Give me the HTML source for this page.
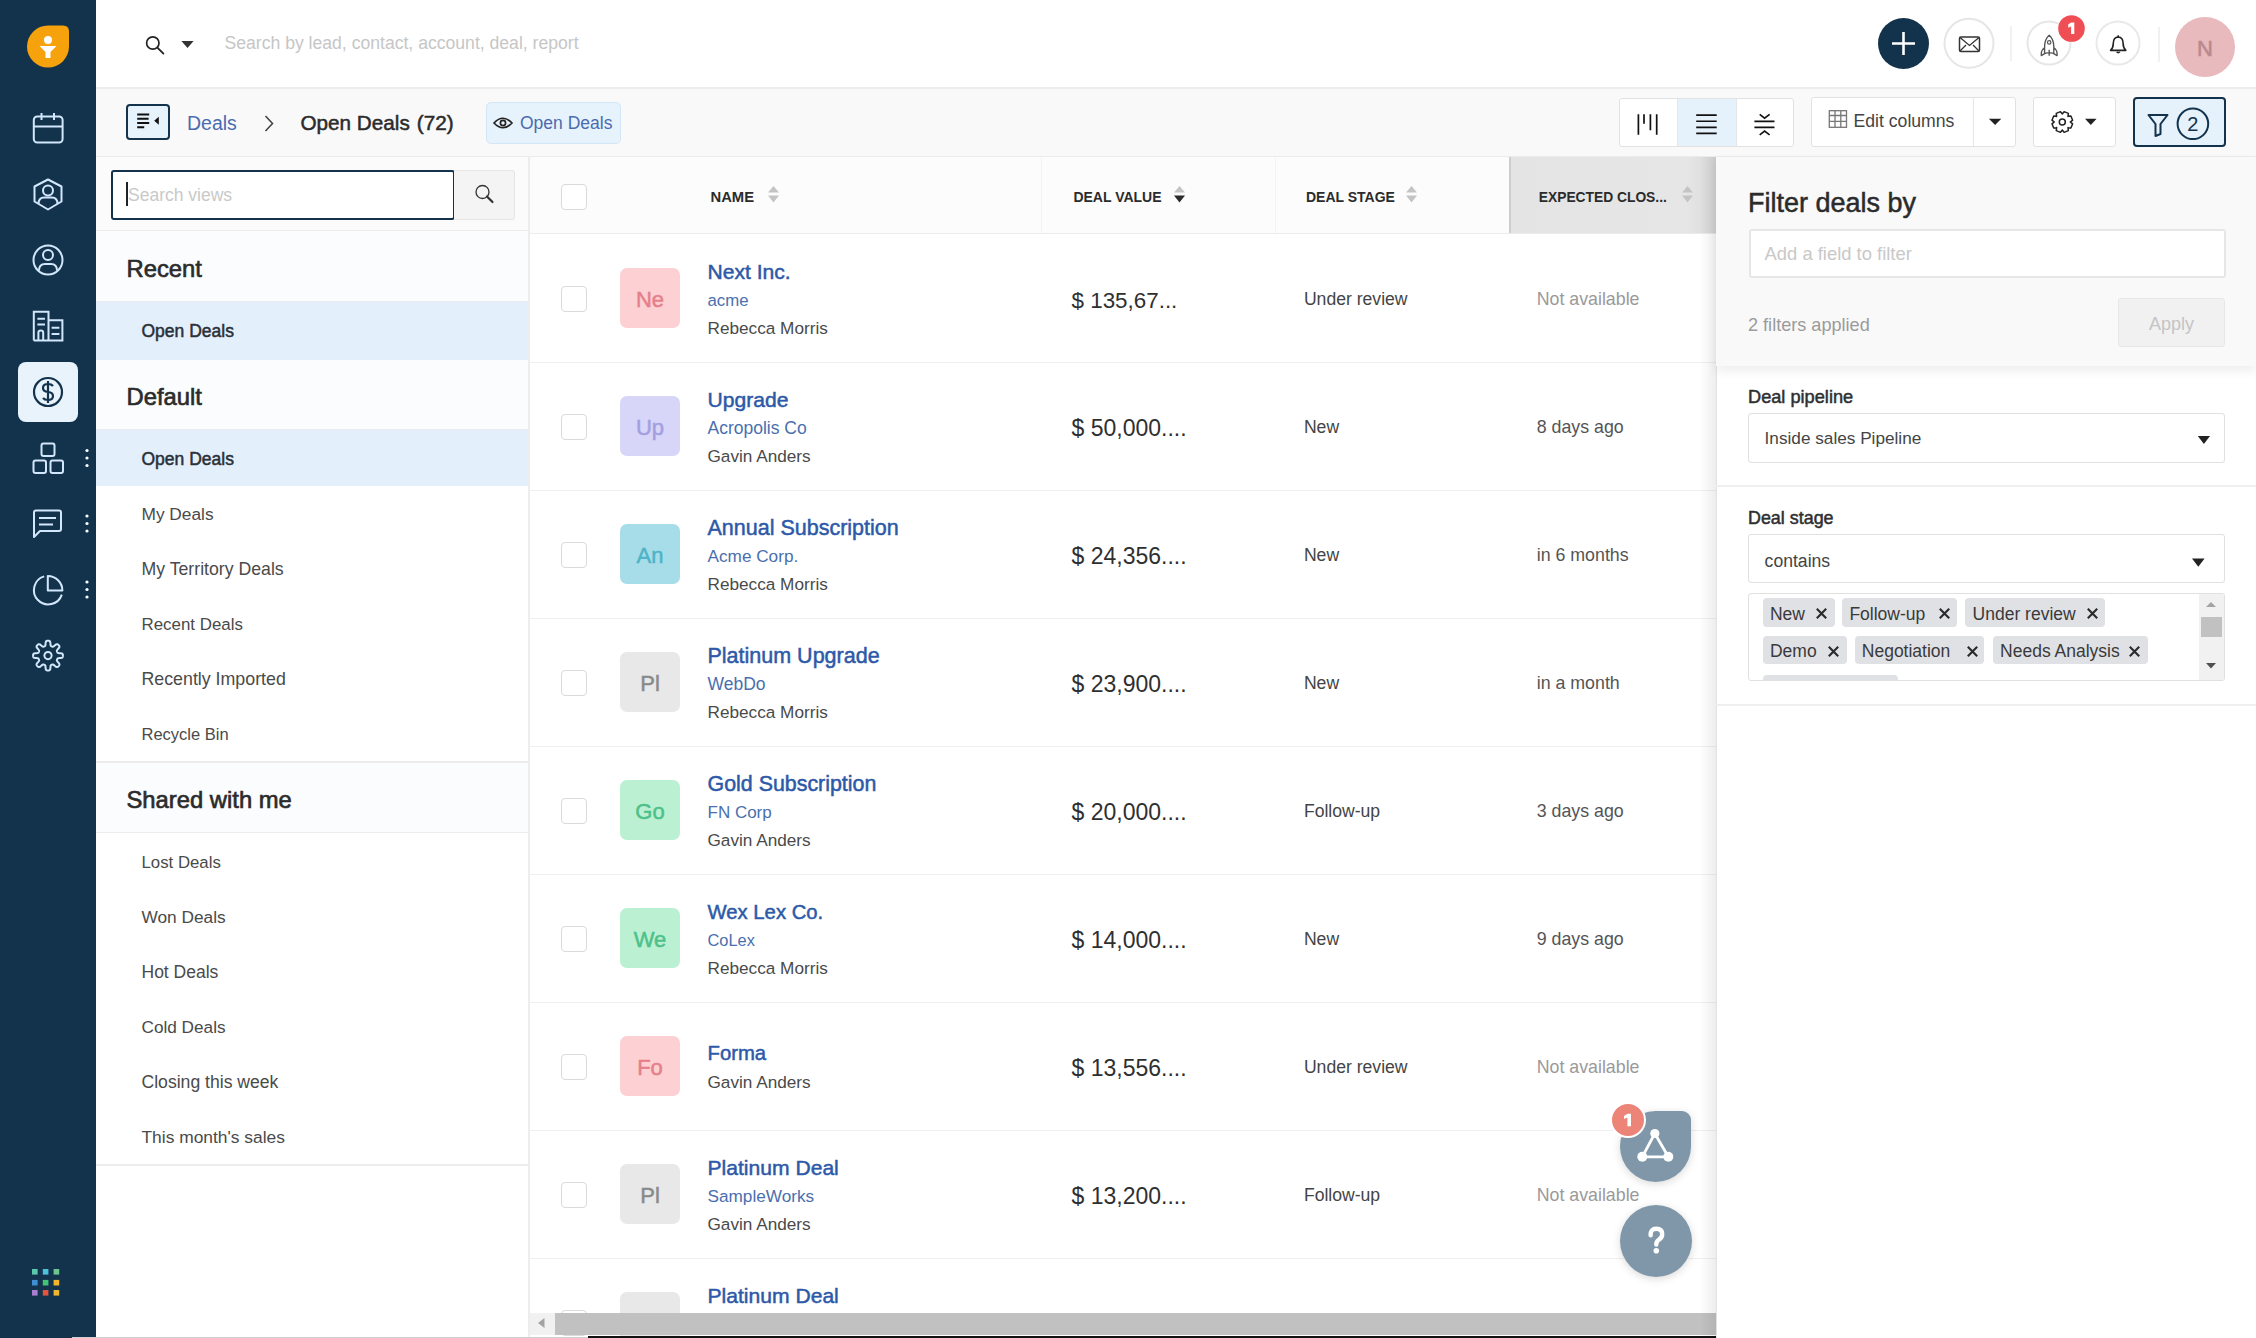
<!DOCTYPE html>
<html><head><meta charset="utf-8">
<style>
*{box-sizing:border-box;margin:0;padding:0}
html,body{width:2256px;height:1338px;overflow:hidden;background:#fff;font-family:"Liberation Sans",sans-serif;color:#333}
.a{position:absolute}
#nav{left:0;top:0;width:96px;height:1338px;background:#13334c}
#top{left:96px;top:0;width:2160px;height:88px;background:#fff;border-bottom:1px solid #ececec}
#sub{left:96px;top:88px;width:2160px;height:69px;background:#f9f9f9;border-bottom:1px solid #ebebeb}
#views{left:96px;top:157px;width:434px;height:1181px;background:#fff;border-right:2px solid #efefef}
#tbl{left:530px;top:157px;width:1186px;height:1181px;background:#fff;overflow:hidden}
#flt{left:1716px;top:157px;width:540px;height:1181px;background:#fff;box-shadow:-4px 0 6px rgba(0,0,0,.10)}
.ic{stroke:#d2e7fb;fill:none;stroke-width:2}
.t{white-space:nowrap;line-height:1}
</style></head><body>
<div id="nav" class="a">
<svg class="a" style="left:0;top:0" width="96" height="700" viewBox="0 0 96 700">
 <path d="M48 25.5 H63 Q69 25.5 69 31.5 V46.6 A21 21 0 1 1 48 25.5 Z" fill="#f6a20c"/>
 <circle cx="48" cy="40" r="4" fill="#fff"/>
 <path d="M39.5 46 H56.5 L50.5 52 V58 H45.5 V52 Z" fill="#fff"/>
 <g class="ic">
  <rect x="33.8" y="116.5" width="28.8" height="26" rx="3.5"/>
  <path d="M33.8 126.5 H62.6 M41.5 113 V120 M54 113 V120"/>
  <path d="M48 179.5 L61.5 186.5 V201.5 L48 209.5 L34.5 201.5 V186.5 Z" stroke-linejoin="round"/>
  <circle cx="48" cy="190.5" r="5"/>
  <path d="M38.5 204 Q38.5 197.5 44 197.5 H52 Q57.5 197.5 57.5 204"/>
  <circle cx="48" cy="260" r="14.5"/>
  <circle cx="48" cy="255" r="5"/>
  <path d="M39 270.5 Q39 264 45 264 H51 Q57 264 57 270.5"/>
  <path d="M33.8 340.5 V311.8 H48.5 V340.5 M48.5 320.3 H62.4 V340.5 H33.8 M37.4 318.8 H45 M37.4 324.6 H45 M38.4 340.5 V332.4 Q38.4 330.4 40.8 330.4 Q43.2 330.4 43.2 332.4 V340.5 M51.6 327.8 H59.4 M51.6 334 H59.4"/>
 </g>
 <rect x="18" y="362" width="60" height="60" rx="8" fill="#e9f3fc"/>
 <circle cx="48" cy="392" r="14" stroke="#13334c" stroke-width="2.2" fill="none"/>
 <path d="M53 386 Q51.5 384 48 384 Q43 384 43 388 Q43 391.5 48 392 Q53 392.5 53 396 Q53 400 48 400 Q44.5 400 43 398 M48 381 V403" stroke="#13334c" stroke-width="2.2" fill="none"/>
 <g class="ic">
  <rect x="41.5" y="443.5" width="13" height="12.5" rx="2"/>
  <rect x="33.5" y="460.5" width="12.5" height="12.5" rx="2"/>
  <rect x="50.5" y="460.5" width="12.5" height="12.5" rx="2"/>
  <path d="M34 537 V512.5 Q34 510.5 36 510.5 H59 Q61 510.5 61 512.5 V529 Q61 531 59 531 H40 Z" stroke-linejoin="round"/>
  <path d="M39 518 H56 M39 524.5 H53"/>
  <path d="M61.8 594.6 A14.3 14.3 0 1 1 44.2 576.4"/>
  <path d="M47.8 576 A14.6 14.6 0 0 1 62.4 590.5 H47.8 Z" stroke-linejoin="round"/>
 </g>
 <g fill="#fff"><circle cx="87" cy="450.5" r="1.6"/><circle cx="87" cy="458" r="1.6"/><circle cx="87" cy="465.5" r="1.6"/>
 <circle cx="87" cy="516" r="1.6"/><circle cx="87" cy="523.5" r="1.6"/><circle cx="87" cy="531" r="1.6"/>
 <circle cx="87" cy="582" r="1.6"/><circle cx="87" cy="589.5" r="1.6"/><circle cx="87" cy="597" r="1.6"/></g>
 <g class="ic">
  <path d="M62.90 655.60 L62.89 655.99 L62.85 656.38 L62.77 656.76 L62.63 657.14 L62.33 657.49 L61.74 657.78 L60.76 657.97 L59.56 658.06 L58.58 658.14 L58.00 658.28 L57.68 658.47 L57.49 658.68 L57.36 658.91 L57.25 659.15 L57.15 659.39 L57.05 659.63 L56.96 659.87 L56.89 660.13 L56.87 660.42 L56.96 660.77 L57.28 661.29 L57.91 662.04 L58.70 662.95 L59.26 663.78 L59.46 664.40 L59.43 664.85 L59.27 665.23 L59.05 665.55 L58.80 665.85 L58.54 666.14 L58.25 666.40 L57.95 666.65 L57.63 666.87 L57.25 667.03 L56.80 667.06 L56.18 666.86 L55.35 666.30 L54.44 665.51 L53.69 664.88 L53.17 664.56 L52.82 664.47 L52.53 664.49 L52.27 664.56 L52.03 664.65 L51.79 664.75 L51.55 664.85 L51.31 664.96 L51.08 665.09 L50.87 665.28 L50.68 665.60 L50.54 666.18 L50.46 667.16 L50.37 668.36 L50.18 669.34 L49.89 669.93 L49.54 670.23 L49.16 670.37 L48.78 670.45 L48.39 670.49 L48.00 670.50 L47.61 670.49 L47.22 670.45 L46.84 670.37 L46.46 670.23 L46.11 669.93 L45.82 669.34 L45.63 668.36 L45.54 667.16 L45.46 666.18 L45.32 665.60 L45.13 665.28 L44.92 665.09 L44.69 664.96 L44.45 664.85 L44.21 664.75 L43.97 664.65 L43.73 664.56 L43.47 664.49 L43.18 664.47 L42.83 664.56 L42.31 664.88 L41.56 665.51 L40.65 666.30 L39.82 666.86 L39.20 667.06 L38.75 667.03 L38.37 666.87 L38.05 666.65 L37.75 666.40 L37.46 666.14 L37.20 665.85 L36.95 665.55 L36.73 665.23 L36.57 664.85 L36.54 664.40 L36.74 663.78 L37.30 662.95 L38.09 662.04 L38.72 661.29 L39.04 660.77 L39.13 660.42 L39.11 660.13 L39.04 659.87 L38.95 659.63 L38.85 659.39 L38.75 659.15 L38.64 658.91 L38.51 658.68 L38.32 658.47 L38.00 658.28 L37.42 658.14 L36.44 658.06 L35.24 657.97 L34.26 657.78 L33.67 657.49 L33.37 657.14 L33.23 656.76 L33.15 656.38 L33.11 655.99 L33.10 655.60 L33.11 655.21 L33.15 654.82 L33.23 654.44 L33.37 654.06 L33.67 653.71 L34.26 653.42 L35.24 653.23 L36.44 653.14 L37.42 653.06 L38.00 652.92 L38.32 652.73 L38.51 652.52 L38.64 652.29 L38.75 652.05 L38.85 651.81 L38.95 651.57 L39.04 651.33 L39.11 651.07 L39.13 650.78 L39.04 650.43 L38.72 649.91 L38.09 649.16 L37.30 648.25 L36.74 647.42 L36.54 646.80 L36.57 646.35 L36.73 645.97 L36.95 645.65 L37.20 645.35 L37.46 645.06 L37.75 644.80 L38.05 644.55 L38.37 644.33 L38.75 644.17 L39.20 644.14 L39.82 644.34 L40.65 644.90 L41.56 645.69 L42.31 646.32 L42.83 646.64 L43.18 646.73 L43.47 646.71 L43.73 646.64 L43.97 646.55 L44.21 646.45 L44.45 646.35 L44.69 646.24 L44.92 646.11 L45.13 645.92 L45.32 645.60 L45.46 645.02 L45.54 644.04 L45.63 642.84 L45.82 641.86 L46.11 641.27 L46.46 640.97 L46.84 640.83 L47.22 640.75 L47.61 640.71 L48.00 640.70 L48.39 640.71 L48.78 640.75 L49.16 640.83 L49.54 640.97 L49.89 641.27 L50.18 641.86 L50.37 642.84 L50.46 644.04 L50.54 645.02 L50.68 645.60 L50.87 645.92 L51.08 646.11 L51.31 646.24 L51.55 646.35 L51.79 646.45 L52.03 646.55 L52.27 646.64 L52.53 646.71 L52.82 646.73 L53.17 646.64 L53.69 646.32 L54.44 645.69 L55.35 644.90 L56.18 644.34 L56.80 644.14 L57.25 644.17 L57.63 644.33 L57.95 644.55 L58.25 644.80 L58.54 645.06 L58.80 645.35 L59.05 645.65 L59.27 645.97 L59.43 646.35 L59.46 646.80 L59.26 647.42 L58.70 648.25 L57.91 649.16 L57.28 649.91 L56.96 650.43 L56.87 650.78 L56.89 651.07 L56.96 651.33 L57.05 651.57 L57.15 651.81 L57.25 652.05 L57.36 652.29 L57.49 652.52 L57.68 652.73 L58.00 652.92 L58.58 653.06 L59.56 653.14 L60.76 653.23 L61.74 653.42 L62.33 653.71 L62.63 654.06 L62.77 654.44 L62.85 654.82 L62.89 655.21 Z" stroke-linejoin="round"/>
  <circle cx="48" cy="655.6" r="3.6"/>
 </g>
</svg>
<svg class="a" style="left:31px;top:1268px" width="30" height="30" viewBox="0 0 30 30">
 <rect x="1" y="1" width="5.6" height="5.6" fill="#5cc9ad"/><rect x="11.8" y="1" width="5.6" height="5.6" fill="#4cc3dc"/><rect x="22.6" y="1" width="5.6" height="5.6" fill="#6cc58e"/>
 <rect x="1" y="11.9" width="5.6" height="5.6" fill="#418ed2"/><rect x="11.8" y="11.9" width="5.6" height="5.6" fill="#44c377"/><rect x="22.6" y="11.9" width="5.6" height="5.6" fill="#f2b42a"/>
 <rect x="1" y="22" width="5.6" height="5.6" fill="#a77ed0"/><rect x="11.8" y="22" width="5.6" height="5.6" fill="#e3543f"/><rect x="22.6" y="22" width="5.6" height="5.6" fill="#eeb72e"/>
</svg>
</div>
<div id="top" class="a">
<svg class="a" style="left:40px;top:20px" width="120" height="50" viewBox="136 20 120 50">
 <circle cx="152.8" cy="43" r="6.2" stroke="#222" stroke-width="1.7" fill="none"/>
 <path d="M157.4 47.6 L163.4 53.6" stroke="#222" stroke-width="1.8" stroke-linecap="round"/>
 <path d="M181.4 41 H193.6 L187.5 48 Z" fill="#333"/>
</svg>
<div class="a t" style="left:128.5px;top:34.8px;font-size:17.6px;color:#c6c6c6">Search by lead, contact, account, deal, report</div>
<svg class="a" style="left:1776px;top:0" width="384" height="88" viewBox="1872 0 384 88">
 <circle cx="1903.5" cy="43.5" r="25.5" fill="#13334c"/>
 <path d="M1903.5 32 V55 M1892 43.5 H1915" stroke="#fff" stroke-width="2.6"/>
 <circle cx="1969" cy="43.3" r="24.5" fill="#fff" stroke="#e6e6e6" stroke-width="2"/>
 <rect x="1959.5" y="37" width="20" height="14.5" rx="1.5" fill="none" stroke="#333" stroke-width="1.5"/>
 <path d="M1960 37.5 L1969.5 45.5 L1979 37.5 M1960 51 L1966 45 M1979 51 L1973 45" fill="none" stroke="#333" stroke-width="1.3"/>
 <path d="M2011 26 V61" stroke="#ececec" stroke-width="1.5"/>
 <circle cx="2049" cy="43" r="21.5" fill="#fff" stroke="#e6e6e6" stroke-width="2"/>
 <path d="M2044.6 53.6 V46.5 Q2044.6 39.2 2049.2 35.2 Q2053.8 39.2 2053.8 46.5 V53.6 M2044.6 47.8 Q2041.3 50.2 2041.3 53.6 V55.6 L2044.6 53.6 M2053.8 47.8 Q2057.1 50.2 2057.1 53.6 V55.6 L2053.8 53.6 M2044.6 53.6 Q2047 52.3 2049.2 53.2 Q2051.4 52.3 2053.8 53.6 M2049.2 49.8 V55.8" fill="none" stroke="#555" stroke-width="1.35" stroke-linejoin="round"/>
 <circle cx="2049.2" cy="42.4" r="1.7" fill="none" stroke="#555" stroke-width="1.2"/>
 <circle cx="2071.5" cy="28.5" r="13.3" fill="#ef4e55"/>
 <path d="M2071.1 22.4 H2074.3 V34 H2071.1 V26.4 L2068.2 27.7 V24.6 Z" fill="#fff"/>
 <circle cx="2118" cy="43" r="21.5" fill="#fff" stroke="#e9e9e9" stroke-width="2"/>
 <path d="M2110.6 50.4 Q2113.3 47.8 2113.3 43.2 Q2113.3 37.3 2118.2 37 Q2123.1 37.3 2123.1 43.2 Q2123.1 47.8 2125.8 50.4 Z" fill="none" stroke="#222" stroke-width="1.6" stroke-linejoin="round"/>
 <path d="M2116.6 51.8 Q2118.2 53.6 2119.8 51.8 M2118.2 35.2 V37" fill="none" stroke="#222" stroke-width="1.5"/>
 <path d="M2159 27 V62" stroke="#ececec" stroke-width="1.5"/>
 <circle cx="2205" cy="47" r="30" fill="#e8b9bd"/>
 <text x="2205" y="56" text-anchor="middle" font-family="Liberation Sans" font-size="22" fill="#b98a90" stroke="#b98a90" stroke-width="0.6">N</text>
</svg>
</div>
<div id="sub" class="a">
<div class="a" style="left:30px;top:16px;width:44px;height:36px;border:2px solid #13334c;border-radius:4px;background:#e6f2fc"></div>
<svg class="a" style="left:30px;top:16px" width="44" height="36" viewBox="126 104 44 36">
 <path d="M137.2 114.5 H149.2 M137.2 118.8 H148.6 M137.2 123 H149.2 M137.2 127.2 H144.2" stroke="#111" stroke-width="1.9"/>
 <path d="M158.8 116.8 V124.8 L154.2 120.8 Z" fill="#111"/>
</svg>
<div class="a t" style="left:91px;top:26.3px;font-size:19.5px;color:#4a6bb0">Deals</div>
<svg class="a" style="left:168px;top:26px" width="10" height="18" viewBox="264 114 10 18"><path d="M265.5 116 L272.5 123.5 L265.5 131" fill="none" stroke="#444" stroke-width="1.6"/></svg>
<div class="a t" style="left:204.5px;top:25.3px;font-size:20.7px;color:#2b2b2b;-webkit-text-stroke:0.5px #2b2b2b">Open Deals</div><div class="a t" style="left:320.8px;top:25.3px;font-size:20.7px;color:#2b2b2b;-webkit-text-stroke:0.5px #2b2b2b">(72)</div>
<div class="a" style="left:389.5px;top:13.7px;width:135px;height:42px;border:1.5px solid #d3e6f5;border-radius:5px;background:#e7f3fc"></div>
<svg class="a" style="left:396px;top:26px" width="24" height="18" viewBox="492 114 24 18">
 <path d="M494 123 Q503 113.5 512 123 Q503 132.5 494 123 Z" fill="none" stroke="#222" stroke-width="1.7"/>
 <circle cx="503" cy="123" r="2.6" fill="none" stroke="#222" stroke-width="1.7"/>
</svg>
<div class="a t" style="left:424px;top:27px;font-size:17.5px;color:#4a6bb0">Open Deals</div>

<div class="a" style="left:1522.7px;top:9.5px;width:175.5px;height:49.5px;border:1.5px solid #e2e2e2;border-radius:3px;background:#fff"></div>
<div class="a" style="left:1580.5px;top:11px;width:60px;height:46.5px;background:#e5f1fb;border-left:1.5px solid #e6e6e6;border-right:1.5px solid #e6e6e6"></div>
<svg class="a" style="left:1522px;top:9px" width="176" height="50" viewBox="1618 97 176 50">
 <path d="M1638.4 114.3 V134.8 M1644 114.3 V123.7 M1650.4 114.3 V130.3 M1656.7 114.3 V134.8" stroke="#111" stroke-width="1.7"/>
 <path d="M1696.2 115.1 H1716.7 M1696.2 121.2 H1716.7 M1696.2 127.4 H1716.7 M1696.2 133.4 H1716.7" stroke="#111" stroke-width="1.6"/>
 <path d="M1754.4 121.4 H1774.5 M1754.4 127.4 H1774.5" stroke="#111" stroke-width="1.6"/>
 <path d="M1759.7 114.4 L1764.6 118.2 L1769.6 114.4 M1759.7 134.8 L1764.6 131 L1769.6 134.8" fill="none" stroke="#111" stroke-width="1.6"/>
</svg>

<div class="a" style="left:1714.7px;top:9.3px;width:205.5px;height:49.5px;border:1.5px solid #e2e2e2;border-radius:3px;background:#fff"></div>
<div class="a" style="left:1876.7px;top:10px;width:1.5px;height:48px;background:#e6e6e6"></div>
<svg class="a" style="left:1732px;top:21px" width="20" height="20" viewBox="1828 109 20 20">
 <rect x="1829.3" y="110.7" width="17.2" height="16.6" fill="none" stroke="#777" stroke-width="1.3"/>
 <path d="M1829.3 115.5 H1846.5 M1829.3 121.3 H1846.5 M1835 110.7 V127.3 M1840.8 110.7 V127.3" stroke="#777" stroke-width="1.3"/>
</svg>
<div class="a t" style="left:1757.6px;top:25px;font-size:17.6px;color:#444">Edit columns</div>
<svg class="a" style="left:1892px;top:28px" width="14" height="10" viewBox="1988 116 14 10"><path d="M1988.9 118.8 H2001.3 L1995.1 125.1 Z" fill="#222"/></svg>

<div class="a" style="left:1936.8px;top:9.3px;width:83px;height:49.5px;border:1.5px solid #e2e2e2;border-radius:3px;background:#fff"></div>
<svg class="a" style="left:1950px;top:106px;top:18px" width="52" height="30" viewBox="2046 106 52 30">
 <path d="M2070.30 121.94 L2072.64 123.80 L2070.89 128.04 L2067.92 127.70 L2068.00 127.62 L2068.34 130.59 L2064.10 132.34 L2062.24 130.00 L2062.36 130.00 L2060.50 132.34 L2056.26 130.59 L2056.60 127.62 L2056.68 127.70 L2053.71 128.04 L2051.96 123.80 L2054.30 121.94 L2054.30 122.06 L2051.96 120.20 L2053.71 115.96 L2056.68 116.30 L2056.60 116.38 L2056.26 113.41 L2060.50 111.66 L2062.36 114.00 L2062.24 114.00 L2064.10 111.66 L2068.34 113.41 L2068.00 116.38 L2067.92 116.30 L2070.89 115.96 L2072.64 120.20 L2070.30 122.06 Z" fill="none" stroke="#222" stroke-width="1.5" stroke-linejoin="round"/>
 <circle cx="2062.3" cy="122" r="3" fill="none" stroke="#222" stroke-width="1.5"/>
 <path d="M2085 118.8 H2096.6 L2090.8 125.1 Z" fill="#222"/>
</svg>

<div class="a" style="left:2036.5px;top:9.2px;width:93px;height:50px;border:2.6px solid #13334c;border-radius:4px;background:#e5f1fb"></div>
<svg class="a" style="left:2046px;top:18px" width="72" height="34" viewBox="2142 106 72 34">
 <path d="M2148.5 115 H2167.5 L2160.5 124 V134 L2155.5 136 V124 Z" fill="none" stroke="#13334c" stroke-width="2" stroke-linejoin="round"/>
 <circle cx="2192.9" cy="123.8" r="15.3" fill="none" stroke="#13334c" stroke-width="2"/>
 <text x="2192.9" y="131" text-anchor="middle" font-family="Liberation Sans" font-size="20" fill="#13334c">2</text>
</svg>
</div>

<div class="a" style="left:96px;top:87px;width:2160px;height:2px;background:#ececec"></div>
<div class="a" style="left:96px;top:157px;width:434px;height:1181px;background:#fff;border-right:2px solid #ededed"></div>
<div class="a" style="left:96px;top:157px;width:432px;height:74px;background:#fbfbfc;border-bottom:1.5px solid #ececec"></div>
<div class="a" style="left:111px;top:169.5px;width:344px;height:50px;border:2px solid #13334c;border-radius:3px;background:#fff"></div>
<div class="a" style="left:454px;top:169.5px;width:60.5px;height:50px;border:1.5px solid #e6e6e6;border-left:none;border-radius:0 3px 3px 0;background:#f4f4f4"></div>
<svg class="a" style="left:470px;top:180px" width="28" height="28" viewBox="470 180 28 28"><circle cx="482.5" cy="192" r="6.5" fill="none" stroke="#333" stroke-width="1.3"/><path d="M487 196.5 L492.5 202" stroke="#333" stroke-width="2.2" stroke-linecap="round"/></svg>
<div class="a" style="left:126px;top:182px;width:2px;height:24px;background:#222"></div>
<div class="a t" style="left:128.0px;top:187px;font-size:17.5px;color:#c9c9c9;">Search views</div>
<div class="a" style="left:96px;top:231px;width:432px;height:71px;background:#fafcfe;border-bottom:1.5px solid #ececec"></div><div class="a t" style="left:126.5px;top:257px;font-size:23.8px;color:#2b2b2b;-webkit-text-stroke:0.65px #2b2b2b;">Recent</div>
<div class="a" style="left:96px;top:302px;width:432px;height:57.5px;background:#e3f0fb"></div><div class="a t" style="left:141.5px;top:323px;font-size:17.5px;color:#2b2f38;-webkit-text-stroke:0.5px #2b2f38;">Open Deals</div>
<div class="a" style="left:96px;top:359.5px;width:432px;height:70.0px;background:#fafcfe;border-bottom:1.5px solid #ececec"></div><div class="a t" style="left:126.5px;top:385px;font-size:23.8px;color:#2b2b2b;-webkit-text-stroke:0.65px #2b2b2b;">Default</div>
<div class="a" style="left:96px;top:429.5px;width:432px;height:56.0px;background:#e3f0fb"></div><div class="a t" style="left:141.5px;top:451px;font-size:17.5px;color:#2b2f38;-webkit-text-stroke:0.5px #2b2f38;">Open Deals</div>
<div class="a t" style="left:141.5px;top:506px;font-size:17.3px;color:#4a4a4a;">My Deals</div>
<div class="a t" style="left:141.5px;top:561px;font-size:17.7px;color:#4a4a4a;">My Territory Deals</div>
<div class="a t" style="left:141.5px;top:617px;font-size:16.9px;color:#4a4a4a;">Recent Deals</div>
<div class="a t" style="left:141.5px;top:671px;font-size:17.8px;color:#4a4a4a;">Recently Imported</div>
<div class="a t" style="left:141.5px;top:726px;font-size:16.5px;color:#4a4a4a;">Recycle Bin</div>
<div class="a" style="left:96px;top:761px;width:432px;height:1.5px;background:#ececec"></div>
<div class="a" style="left:96px;top:762.5px;width:432px;height:70.0px;background:#fafcfe;border-bottom:1.5px solid #ececec"></div><div class="a t" style="left:126.5px;top:788px;font-size:23.8px;color:#2b2b2b;-webkit-text-stroke:0.65px #2b2b2b;">Shared with me</div>
<div class="a t" style="left:141.5px;top:855px;font-size:16.8px;color:#4a4a4a;">Lost Deals</div>
<div class="a t" style="left:141.5px;top:909px;font-size:17.3px;color:#4a4a4a;">Won Deals</div>
<div class="a t" style="left:141.5px;top:964px;font-size:17.5px;color:#4a4a4a;">Hot Deals</div>
<div class="a t" style="left:141.5px;top:1019px;font-size:17.2px;color:#4a4a4a;">Cold Deals</div>
<div class="a t" style="left:141.5px;top:1074px;font-size:17.6px;color:#4a4a4a;">Closing this week</div>
<div class="a t" style="left:141.5px;top:1129px;font-size:17.4px;color:#4a4a4a;">This month's sales</div>
<div class="a" style="left:96px;top:1164px;width:432px;height:1.5px;background:#ececec"></div>
<div class="a" style="left:530px;top:157px;width:1186px;height:1181px;background:#fff"></div>
<div class="a" style="left:530px;top:157px;width:1186px;height:76.5px;background:#fcfcfc;border-bottom:1.5px solid #ebebeb"></div>
<div class="a" style="left:1041px;top:157px;width:1px;height:76px;background:#f3f3f3"></div>
<div class="a" style="left:1275px;top:157px;width:1px;height:76px;background:#f3f3f3"></div>
<div class="a" style="left:1509px;top:157px;width:207px;height:76px;background:linear-gradient(to right,#e4e4e4 0,#e6e6e6 85%,#d9d9d9 100%);border-left:2px solid #cdcdcd"></div>
<div class="a" style="left:560.5px;top:183.5px;width:26px;height:26px;border:1.5px solid #dadada;border-radius:4px;background:#fff"></div>
<div class="a t" style="left:710.5px;top:190px;font-size:14.8px;color:#2b2b2b;font-weight:bold;">NAME</div>
<svg class="a" style="left:767px;top:184px" width="13" height="22" viewBox="0 0 13 22"><path d="M1 8.5 L6.5 2 L12 8.5 Z" fill="#c4c4c4"/><path d="M1 11.5 L6.5 18.5 L12 11.5 Z" fill="#c4c4c4"/></svg>
<div class="a t" style="left:1073.4px;top:190px;font-size:14px;color:#2b2b2b;font-weight:bold;">DEAL VALUE</div>
<svg class="a" style="left:1173px;top:184px" width="13" height="22" viewBox="0 0 13 22"><path d="M1 8.5 L6.5 2 L12 8.5 Z" fill="#c4c4c4"/><path d="M1 11.5 L6.5 18.5 L12 11.5 Z" fill="#2b2b2b"/></svg>
<div class="a t" style="left:1306.0px;top:190px;font-size:14px;color:#2b2b2b;font-weight:bold;">DEAL STAGE</div>
<svg class="a" style="left:1405px;top:184px" width="13" height="22" viewBox="0 0 13 22"><path d="M1 8.5 L6.5 2 L12 8.5 Z" fill="#c4c4c4"/><path d="M1 11.5 L6.5 18.5 L12 11.5 Z" fill="#c4c4c4"/></svg>
<div class="a t" style="left:1538.8px;top:191px;font-size:13.8px;color:#2b2b2b;font-weight:bold;">EXPECTED CLOS...</div>
<svg class="a" style="left:1680.5px;top:184px" width="13" height="22" viewBox="0 0 13 22"><path d="M1 8.5 L6.5 2 L12 8.5 Z" fill="#c4c4c4"/><path d="M1 11.5 L6.5 18.5 L12 11.5 Z" fill="#c4c4c4"/></svg>
<div class="a" style="left:530px;top:361.5px;width:1186px;height:1.5px;background:#efefef"></div>
<div class="a" style="left:560.5px;top:285.5px;width:26px;height:26px;border:1.5px solid #dadada;border-radius:4px;background:#fff"></div>
<div class="a" style="left:620px;top:268px;width:60px;height:60px;border-radius:7px;background:#fdd0d3"></div>
<div class="a t" style="left:650.0px;top:289px;font-size:22px;color:#e5808a;-webkit-text-stroke:0.5px #e5808a;width:0;display:flex;justify-content:center;">Ne</div>
<div class="a t" style="left:707.5px;top:261px;font-size:21.1px;color:#2d59a8;-webkit-text-stroke:0.5px #2d59a8;">Next Inc.</div>
<div class="a t" style="left:707.5px;top:293px;font-size:16.8px;color:#4a6fae;">acme</div>
<div class="a t" style="left:707.5px;top:320px;font-size:17.2px;color:#4a4a4a;">Rebecca Morris</div>
<div class="a t" style="left:1071.5px;top:290px;font-size:22.4px;color:#2f2f2f;">$ 135,67...</div>
<div class="a t" style="left:1303.9px;top:291px;font-size:17.6px;color:#444;">Under review</div>
<div class="a t" style="left:1536.7px;top:291px;font-size:17.8px;color:#9a9a9a;">Not available</div>
<div class="a" style="left:530px;top:489.5px;width:1186px;height:1.5px;background:#efefef"></div>
<div class="a" style="left:560.5px;top:413.5px;width:26px;height:26px;border:1.5px solid #dadada;border-radius:4px;background:#fff"></div>
<div class="a" style="left:620px;top:396px;width:60px;height:60px;border-radius:7px;background:#d7d5f8"></div>
<div class="a t" style="left:650.0px;top:417px;font-size:22px;color:#a39fe0;-webkit-text-stroke:0.5px #a39fe0;width:0;display:flex;justify-content:center;">Up</div>
<div class="a t" style="left:707.5px;top:389px;font-size:21.1px;color:#2d59a8;-webkit-text-stroke:0.5px #2d59a8;">Upgrade</div>
<div class="a t" style="left:707.5px;top:420px;font-size:17.5px;color:#4a6fae;">Acropolis Co</div>
<div class="a t" style="left:707.5px;top:448px;font-size:17.2px;color:#4a4a4a;">Gavin Anders</div>
<div class="a t" style="left:1071.5px;top:417px;font-size:23px;color:#2f2f2f;">$ 50,000....</div>
<div class="a t" style="left:1303.9px;top:419px;font-size:17.6px;color:#444;">New</div>
<div class="a t" style="left:1536.7px;top:419px;font-size:17.8px;color:#555;">8 days ago</div>
<div class="a" style="left:530px;top:617.5px;width:1186px;height:1.5px;background:#efefef"></div>
<div class="a" style="left:560.5px;top:541.5px;width:26px;height:26px;border:1.5px solid #dadada;border-radius:4px;background:#fff"></div>
<div class="a" style="left:620px;top:524px;width:60px;height:60px;border-radius:7px;background:#a7dde9"></div>
<div class="a t" style="left:650.0px;top:545px;font-size:22px;color:#4db3c6;-webkit-text-stroke:0.5px #4db3c6;width:0;display:flex;justify-content:center;">An</div>
<div class="a t" style="left:707.5px;top:518px;font-size:21.5px;color:#2d59a8;-webkit-text-stroke:0.5px #2d59a8;">Annual Subscription</div>
<div class="a t" style="left:707.5px;top:548px;font-size:17.2px;color:#4a6fae;">Acme Corp.</div>
<div class="a t" style="left:707.5px;top:576px;font-size:17.2px;color:#4a4a4a;">Rebecca Morris</div>
<div class="a t" style="left:1071.5px;top:545px;font-size:23px;color:#2f2f2f;">$ 24,356....</div>
<div class="a t" style="left:1303.9px;top:547px;font-size:17.6px;color:#444;">New</div>
<div class="a t" style="left:1536.7px;top:547px;font-size:17.8px;color:#555;">in 6 months</div>
<div class="a" style="left:530px;top:745.5px;width:1186px;height:1.5px;background:#efefef"></div>
<div class="a" style="left:560.5px;top:669.5px;width:26px;height:26px;border:1.5px solid #dadada;border-radius:4px;background:#fff"></div>
<div class="a" style="left:620px;top:652px;width:60px;height:60px;border-radius:7px;background:#e8e8e8"></div>
<div class="a t" style="left:650.0px;top:673px;font-size:22px;color:#8a8a8a;-webkit-text-stroke:0.5px #8a8a8a;width:0;display:flex;justify-content:center;">Pl</div>
<div class="a t" style="left:707.5px;top:646px;font-size:21.5px;color:#2d59a8;-webkit-text-stroke:0.5px #2d59a8;">Platinum Upgrade</div>
<div class="a t" style="left:707.5px;top:676px;font-size:17.5px;color:#4a6fae;">WebDo</div>
<div class="a t" style="left:707.5px;top:704px;font-size:17.2px;color:#4a4a4a;">Rebecca Morris</div>
<div class="a t" style="left:1071.5px;top:673px;font-size:23px;color:#2f2f2f;">$ 23,900....</div>
<div class="a t" style="left:1303.9px;top:675px;font-size:17.6px;color:#444;">New</div>
<div class="a t" style="left:1536.7px;top:675px;font-size:17.8px;color:#555;">in a month</div>
<div class="a" style="left:530px;top:873.5px;width:1186px;height:1.5px;background:#efefef"></div>
<div class="a" style="left:560.5px;top:797.5px;width:26px;height:26px;border:1.5px solid #dadada;border-radius:4px;background:#fff"></div>
<div class="a" style="left:620px;top:780px;width:60px;height:60px;border-radius:7px;background:#bbf0d3"></div>
<div class="a t" style="left:650.0px;top:801px;font-size:22px;color:#4dc189;-webkit-text-stroke:0.5px #4dc189;width:0;display:flex;justify-content:center;">Go</div>
<div class="a t" style="left:707.5px;top:774px;font-size:21.4px;color:#2d59a8;-webkit-text-stroke:0.5px #2d59a8;">Gold Subscription</div>
<div class="a t" style="left:707.5px;top:804px;font-size:17.0px;color:#4a6fae;">FN Corp</div>
<div class="a t" style="left:707.5px;top:832px;font-size:17.2px;color:#4a4a4a;">Gavin Anders</div>
<div class="a t" style="left:1071.5px;top:801px;font-size:23px;color:#2f2f2f;">$ 20,000....</div>
<div class="a t" style="left:1303.9px;top:803px;font-size:17.6px;color:#444;">Follow-up</div>
<div class="a t" style="left:1536.7px;top:803px;font-size:17.8px;color:#555;">3 days ago</div>
<div class="a" style="left:530px;top:1001.5px;width:1186px;height:1.5px;background:#efefef"></div>
<div class="a" style="left:560.5px;top:925.5px;width:26px;height:26px;border:1.5px solid #dadada;border-radius:4px;background:#fff"></div>
<div class="a" style="left:620px;top:908px;width:60px;height:60px;border-radius:7px;background:#bbf0d3"></div>
<div class="a t" style="left:650.0px;top:929px;font-size:22px;color:#4dc189;-webkit-text-stroke:0.5px #4dc189;width:0;display:flex;justify-content:center;">We</div>
<div class="a t" style="left:707.5px;top:902px;font-size:20.3px;color:#2d59a8;-webkit-text-stroke:0.5px #2d59a8;">Wex Lex Co.</div>
<div class="a t" style="left:707.5px;top:932px;font-size:16.4px;color:#4a6fae;">CoLex</div>
<div class="a t" style="left:707.5px;top:960px;font-size:17.2px;color:#4a4a4a;">Rebecca Morris</div>
<div class="a t" style="left:1071.5px;top:929px;font-size:23px;color:#2f2f2f;">$ 14,000....</div>
<div class="a t" style="left:1303.9px;top:931px;font-size:17.6px;color:#444;">New</div>
<div class="a t" style="left:1536.7px;top:931px;font-size:17.8px;color:#555;">9 days ago</div>
<div class="a" style="left:530px;top:1129.5px;width:1186px;height:1.5px;background:#efefef"></div>
<div class="a" style="left:560.5px;top:1053.5px;width:26px;height:26px;border:1.5px solid #dadada;border-radius:4px;background:#fff"></div>
<div class="a" style="left:620px;top:1036px;width:60px;height:60px;border-radius:7px;background:#fdd0d3"></div>
<div class="a t" style="left:650.0px;top:1057px;font-size:22px;color:#e5808a;-webkit-text-stroke:0.5px #e5808a;width:0;display:flex;justify-content:center;">Fo</div>
<div class="a t" style="left:707.5px;top:1043px;font-size:20.3px;color:#2d59a8;-webkit-text-stroke:0.5px #2d59a8;">Forma</div>
<div class="a t" style="left:707.5px;top:1074px;font-size:17.2px;color:#4a4a4a;">Gavin Anders</div>
<div class="a t" style="left:1071.5px;top:1057px;font-size:23px;color:#2f2f2f;">$ 13,556....</div>
<div class="a t" style="left:1303.9px;top:1059px;font-size:17.6px;color:#444;">Under review</div>
<div class="a t" style="left:1536.7px;top:1059px;font-size:17.8px;color:#9a9a9a;">Not available</div>
<div class="a" style="left:530px;top:1257.5px;width:1186px;height:1.5px;background:#efefef"></div>
<div class="a" style="left:560.5px;top:1181.5px;width:26px;height:26px;border:1.5px solid #dadada;border-radius:4px;background:#fff"></div>
<div class="a" style="left:620px;top:1164px;width:60px;height:60px;border-radius:7px;background:#e8e8e8"></div>
<div class="a t" style="left:650.0px;top:1185px;font-size:22px;color:#8a8a8a;-webkit-text-stroke:0.5px #8a8a8a;width:0;display:flex;justify-content:center;">Pl</div>
<div class="a t" style="left:707.5px;top:1157px;font-size:21.1px;color:#2d59a8;-webkit-text-stroke:0.5px #2d59a8;">Platinum Deal</div>
<div class="a t" style="left:707.5px;top:1188px;font-size:17.2px;color:#4a6fae;">SampleWorks</div>
<div class="a t" style="left:707.5px;top:1216px;font-size:17.2px;color:#4a4a4a;">Gavin Anders</div>
<div class="a t" style="left:1071.5px;top:1185px;font-size:23px;color:#2f2f2f;">$ 13,200....</div>
<div class="a t" style="left:1303.9px;top:1187px;font-size:17.6px;color:#444;">Follow-up</div>
<div class="a t" style="left:1536.7px;top:1187px;font-size:17.8px;color:#9a9a9a;">Not available</div>
<div class="a" style="left:560.5px;top:1309.5px;width:26px;height:26px;border:1.5px solid #dadada;border-radius:4px;background:#fff"></div>
<div class="a" style="left:620px;top:1292px;width:60px;height:60px;border-radius:7px;background:#e8e8e8"></div>
<div class="a t" style="left:707.5px;top:1285px;font-size:21.1px;color:#2d59a8;-webkit-text-stroke:0.5px #2d59a8;">Platinum Deal</div>
<div class="a" style="left:530px;top:1312.5px;width:1186px;height:22.5px;background:#f1f1f1"></div>
<div class="a" style="left:555px;top:1313px;width:1161px;height:22px;background:#c1c1c1"></div>
<svg class="a" style="left:536px;top:1316px" width="12" height="14" viewBox="0 0 12 14"><path d="M2 7 L8.5 2 V12 Z" fill="#a3a3a3"/></svg>
<div class="a" style="left:588px;top:1336px;width:1128px;height:2px;background:#111"></div>
<div class="a" style="left:72px;top:1336.5px;width:516px;height:1.5px;background:#cfcfcf"></div>
<div class="a" style="left:1700px;top:157px;width:16px;height:1181px;background:linear-gradient(to right,rgba(0,0,0,0),rgba(0,0,0,.07))"></div>
<div class="a" style="left:1716px;top:157px;width:540px;height:1181px;background:#fff;border-left:1px solid #e2e2e2"></div>
<div class="a" style="left:1716px;top:157px;width:540px;height:208.5px;background:#f9f9f9;box-shadow:0 5px 10px rgba(0,0,0,.07)"></div>
<div class="a t" style="left:1748.0px;top:190px;font-size:27px;color:#2b2b2b;-webkit-text-stroke:0.5px #2b2b2b;">Filter deals by</div>
<div class="a" style="left:1748.5px;top:229px;width:477px;height:48.5px;background:#fff;border:2px solid #e6e6e6;border-radius:3px"></div>
<div class="a t" style="left:1764.6px;top:245px;font-size:18.4px;color:#c8c8c8;">Add a field to filter</div>
<div class="a t" style="left:1748.0px;top:316px;font-size:18.1px;color:#9b9b9b;">2 filters applied</div>
<div class="a" style="left:2117.7px;top:298px;width:107.7px;height:48.7px;background:#f1f1f1;border:1.5px solid #e7e7e7;border-radius:3px"></div>
<div class="a t" style="left:2149.0px;top:315px;font-size:18px;color:#c4c4c4;">Apply</div>
<div class="a t" style="left:1748.0px;top:388px;font-size:18.2px;color:#2f2f2f;-webkit-text-stroke:0.5px #2f2f2f;">Deal pipeline</div>
<div class="a" style="left:1748.4px;top:412.5px;width:477px;height:50px;background:#fff;border:1.5px solid #e0e0e0;border-radius:3px"></div>
<div class="a t" style="left:1764.6px;top:430px;font-size:17.2px;color:#444;">Inside sales Pipeline</div>
<svg class="a" style="left:2196px;top:434px" width="16" height="12" viewBox="2196 434 16 12"><path d="M2197.8 436 H2210 L2203.9 444 Z" fill="#222"/></svg>
<div class="a" style="left:1716px;top:485px;width:540px;height:1.5px;background:#efefef"></div>
<div class="a t" style="left:1748.0px;top:510px;font-size:17.9px;color:#2f2f2f;-webkit-text-stroke:0.5px #2f2f2f;">Deal stage</div>
<div class="a" style="left:1748.4px;top:534.4px;width:477px;height:48.5px;background:#fff;border:1.5px solid #e0e0e0;border-radius:3px"></div>
<div class="a t" style="left:1764.6px;top:553px;font-size:17.6px;color:#444;">contains</div>
<svg class="a" style="left:2190px;top:556px" width="16" height="12" viewBox="2190 556 16 12"><path d="M2192 558.6 H2204.6 L2198.3 566.7 Z" fill="#222"/></svg>
<div class="a" style="left:1748.4px;top:592.8px;width:477px;height:88px;background:#fff;border:1.5px solid #e0e0e0;border-radius:3px;overflow:hidden">
<div class="a" style="left:14.1px;top:4.7px;width:71.4px;height:28.5px;background:#dfe1e5;border-radius:4px"></div>
<div class="a t" style="left:20.6px;top:12px;font-size:17.5px;color:#3a3a3a;">New</div>
<svg class="a" style="left:66.0px;top:13.7px" width="13" height="13" viewBox="0 0 13 13"><path d="M1.8 1.8 L11.2 11.2 M11.2 1.8 L1.8 11.2" stroke="#2a2a2a" stroke-width="2.1"/></svg>
<div class="a" style="left:93.1px;top:4.7px;width:115.0px;height:28.5px;background:#dfe1e5;border-radius:4px"></div>
<div class="a t" style="left:100.0px;top:12px;font-size:17.5px;color:#3a3a3a;">Follow-up</div>
<svg class="a" style="left:188.5px;top:13.7px" width="13" height="13" viewBox="0 0 13 13"><path d="M1.8 1.8 L11.2 11.2 M11.2 1.8 L1.8 11.2" stroke="#2a2a2a" stroke-width="2.1"/></svg>
<div class="a" style="left:216.1px;top:4.7px;width:140.0px;height:28.5px;background:#dfe1e5;border-radius:4px"></div>
<div class="a t" style="left:223.2px;top:12px;font-size:17.5px;color:#3a3a3a;">Under review</div>
<svg class="a" style="left:337.0px;top:13.7px" width="13" height="13" viewBox="0 0 13 13"><path d="M1.8 1.8 L11.2 11.2 M11.2 1.8 L1.8 11.2" stroke="#2a2a2a" stroke-width="2.1"/></svg>
<div class="a" style="left:14.1px;top:42.1px;width:83.5px;height:28.5px;background:#dfe1e5;border-radius:4px"></div>
<div class="a t" style="left:20.6px;top:49px;font-size:17.5px;color:#3a3a3a;">Demo</div>
<svg class="a" style="left:77.6px;top:51.1px" width="13" height="13" viewBox="0 0 13 13"><path d="M1.8 1.8 L11.2 11.2 M11.2 1.8 L1.8 11.2" stroke="#2a2a2a" stroke-width="2.1"/></svg>
<div class="a" style="left:106.1px;top:42.1px;width:129.0px;height:28.5px;background:#dfe1e5;border-radius:4px"></div>
<div class="a t" style="left:112.4px;top:49px;font-size:17.5px;color:#3a3a3a;">Negotiation</div>
<svg class="a" style="left:216.2px;top:51.1px" width="13" height="13" viewBox="0 0 13 13"><path d="M1.8 1.8 L11.2 11.2 M11.2 1.8 L1.8 11.2" stroke="#2a2a2a" stroke-width="2.1"/></svg>
<div class="a" style="left:244.1px;top:42.1px;width:154.6px;height:28.5px;background:#dfe1e5;border-radius:4px"></div>
<div class="a t" style="left:250.7px;top:49px;font-size:17.5px;color:#3a3a3a;">Needs Analysis</div>
<svg class="a" style="left:378.7px;top:51.1px" width="13" height="13" viewBox="0 0 13 13"><path d="M1.8 1.8 L11.2 11.2 M11.2 1.8 L1.8 11.2" stroke="#2a2a2a" stroke-width="2.1"/></svg>
<div class="a" style="left:14.1px;top:81.1px;width:135.0px;height:28.5px;background:#dfe1e5;border-radius:4px"></div>
<div class="a t" style="left:20.6px;top:88px;font-size:17.5px;color:#3a3a3a;">Qualification</div>
<svg class="a" style="left:129.6px;top:90.1px" width="13" height="13" viewBox="0 0 13 13"><path d="M1.8 1.8 L11.2 11.2 M11.2 1.8 L1.8 11.2" stroke="#2a2a2a" stroke-width="2.1"/></svg>
<div class="a" style="left:450.1px;top:0;width:25px;height:88px;background:#f1f1f1"></div>
<div class="a" style="left:452.1px;top:23.5px;width:21px;height:20px;background:#c1c1c1"></div>
<svg class="a" style="left:454.1px;top:5.7px" width="16" height="10" viewBox="0 0 16 10"><path d="M3 8 L8 3 L13 8 Z" fill="#a3a3a3"/></svg>
<svg class="a" style="left:454.1px;top:67.7px" width="16" height="10" viewBox="0 0 16 10"><path d="M3 2 L8 7.5 L13 2 Z" fill="#505050"/></svg>
</div>
<div class="a" style="left:1716px;top:704px;width:540px;height:1.5px;background:#efefef"></div>
<div class="a" style="left:1619.6px;top:1110.9px;width:71.3px;height:71.3px;background:#7f97a8;border-radius:50% 9px 50% 50%;box-shadow:0 2px 8px rgba(0,0,0,.15)"></div>
<svg class="a" style="left:1630px;top:1120px" width="50" height="50" viewBox="1630 1120 50 50"><path d="M1654.8 1133.5 L1642.3 1156.8 H1668.3 Z" fill="none" stroke="#fff" stroke-width="2.8" stroke-linejoin="round"/><circle cx="1654.8" cy="1133.5" r="4.6" fill="#fff"/><circle cx="1642.3" cy="1156.8" r="5" fill="#fff"/><circle cx="1668.3" cy="1156.8" r="5" fill="#fff"/></svg>
<div class="a" style="left:1610px;top:1102px;width:36px;height:36px;background:#ec8478;border:2.5px solid #fff;border-radius:50%"></div>
<svg class="a" style="left:1620px;top:1110px" width="16" height="20" viewBox="1620 1110 16 20"><path d="M1627.4 1113.8 H1631 V1126.3 H1627.4 V1117.6 L1624 1119.1 V1115.9 Z" fill="#fff"/></svg>
<div class="a" style="left:1620px;top:1205px;width:72px;height:72px;background:#7f97a8;border-radius:50%;box-shadow:0 2px 8px rgba(0,0,0,.15)"></div>
<svg class="a" style="left:1640px;top:1220px" width="32" height="40" viewBox="1640 1220 32 40"><path d="M1650.6 1235.2 Q1650.4 1228.8 1656.3 1228.8 Q1662.2 1228.8 1662.2 1234.3 Q1662.2 1237.8 1658.7 1239.8 Q1656.3 1241.2 1656.3 1244.6" fill="none" stroke="#fff" stroke-width="4.4" stroke-linecap="round"/><circle cx="1656.3" cy="1250.8" r="2.8" fill="#fff"/></svg>
</body></html>
